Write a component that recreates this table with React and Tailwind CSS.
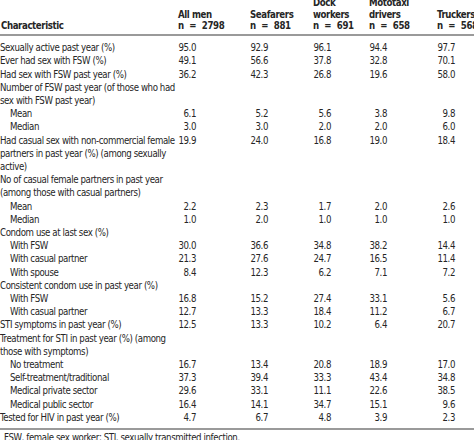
const rows = [
  { label: ['Sexually active past year (%)'], v: ['95.0', '92.9', '96.1', '94.4', '97.7'] },
  { label: ['Ever had sex with FSW (%)'], v: ['49.1', '56.6', '37.8', '32.8', '70.1'] },
  { label: ['Had sex with FSW past year (%)'], v: ['36.2', '42.3', '26.8', '19.6', '58.0'] },
  { label: ['Number of FSW past year (of those who had', 'sex with FSW past year)'] },
  { label: ['Mean'], indent: true, v: ['6.1', '5.2', '5.6', '3.8', '9.8'] },
  { label: ['Median'], indent: true, v: ['3.0', '3.0', '2.0', '2.0', '6.0'] },
  {
    label: ['Had casual sex with non-commercial female', 'partners in past year (%) (among sexually', 'active)'],
    v: ['19.9', '24.0', '16.8', '19.0', '18.4'],
  },
  { label: ['No of casual female partners in past year', '(among those with casual partners)'] },
  { label: ['Mean'], indent: true, v: ['2.2', '2.3', '1.7', '2.0', '2.6'] },
  { label: ['Median'], indent: true, v: ['1.0', '2.0', '1.0', '1.0', '1.0'] },
  { label: ['Condom use at last sex (%)'] },
  { label: ['With FSW'], indent: true, v: ['30.0', '36.6', '34.8', '38.2', '14.4'] },
  { label: ['With casual partner'], indent: true, v: ['21.3', '27.6', '24.7', '16.5', '11.4'] },
  { label: ['With spouse'], indent: true, v: ['8.4', '12.3', '6.2', '7.1', '7.2'] },
  { label: ['Consistent condom use in past year (%)'] },
  { label: ['With FSW'], indent: true, v: ['16.8', '15.2', '27.4', '33.1', '5.6'] },
  { label: ['With casual partner'], indent: true, v: ['12.7', '13.3', '18.4', '11.2', '6.7'] },
  { label: ['STI symptoms in past year (%)'], v: ['12.5', '13.3', '10.2', '6.4', '20.7'] },
  { label: ['Treatment for STI in past year (%) (among', 'those with symptoms)'] },
  { label: ['No treatment'], indent: true, v: ['16.7', '13.4', '20.8', '18.9', '17.0'] },
  { label: ['Self-treatment/traditional'], indent: true, v: ['37.3', '39.4', '33.3', '43.4', '34.8'] },
  { label: ['Medical private sector'], indent: true, v: ['29.6', '33.1', '11.1', '22.6', '38.5'] },
  { label: ['Medical public sector'], indent: true, v: ['16.4', '14.1', '34.7', '15.1', '9.6'] },
  { label: ['Tested for HIV in past year (%)'], v: ['4.7', '6.7', '4.8', '3.9', '2.3'] },
];

const headers = [
  ['All men', '2798'],
  ['Seafarers', '881'],
  ['Dock', 'workers', '691'],
  ['Mototaxi', 'drivers', '658'],
  ['Truckers', '568'],
];

const grid = 'grid grid-cols-[178px_72px_63px_56px_68px_37px]';

export default function App() {
  return (
    <div
      className="w-[474px] h-[440px] overflow-hidden bg-white text-[#262626] text-[9.6px] tracking-[-0.4px]"
      style={{ fontFamily: '"DejaVu Sans Condensed", "Liberation Sans", sans-serif' }}
    >
      {/* Header */}
      <div className={`${grid} -mt-[3px] leading-[11.7px] font-bold items-end`}>
        <div className="pl-[1px]">Characteristic</div>
        {headers.map((h, i) => (
          <div key={i} className="whitespace-nowrap">
            {h.slice(0, -1).map((line, j) => (
              <div key={j}>{line}</div>
            ))}
            <div>
              n <span className="px-[3px]">=</span> {h[h.length - 1]}
            </div>
          </div>
        ))}
      </div>
      <div className="h-[2px] bg-[#9a9a9a] mt-[2px]" />

      {/* Body */}
      <div className="pt-[5px] leading-[13.2px]">
        {rows.map((r, i) => (
          <div key={i} className={grid}>
            <div className={`whitespace-nowrap ${r.indent ? 'pl-[10px]' : ''}`}>
              {r.label.map((line, j) => (
                <div key={j}>{line}</div>
              ))}
            </div>
            {r.v
              ? r.v.map((x, j) => (
                  <div key={j}>
                    <span className="inline-block w-[18px] text-right whitespace-nowrap">{x}</span>
                  </div>
                ))
              : null}
          </div>
        ))}
      </div>
      <div className="h-[2px] bg-[#9a9a9a] mt-[4px]" />
      <div className="pl-[4px] leading-[13px] mt-[1px]">
        FSW, female sex worker; STI, sexually transmitted infection.
      </div>
    </div>
  );
}
